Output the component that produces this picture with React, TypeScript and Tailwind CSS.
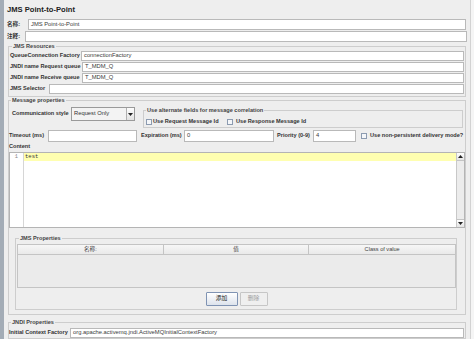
import React from "react";

const font = "font-['Liberation_Sans','Noto_Sans_CJK_SC',sans-serif]";

const Field = ({ value = "", className = "" }: { value?: string; className?: string }) => (
  <div
    className={`h-full bg-white border border-[#b9b9b9] flex items-center pl-[2px] text-[5.8px] leading-none text-[#3a3a3a] whitespace-nowrap overflow-hidden ${className}`}
  >
    {value}
  </div>
);

const Label = ({ text, className = "" }: { text: string; className?: string }) => (
  <span className={`text-[5.6px] font-bold leading-none text-[#333] whitespace-nowrap shrink-0 ${className}`}>
    {text}
  </span>
);

const Box = ({
  title,
  className = "",
  children,
}: {
  title: string;
  className?: string;
  children: React.ReactNode;
}) => (
  <fieldset className={`border border-[#cdcdcd] min-w-0 ${className}`}>
    <legend className="ml-[2px] px-[1px] text-[5.6px] font-bold leading-[6px] text-[#444]">
      {title}
    </legend>
    {children}
  </fieldset>
);

const Check = () => (
  <span className="w-[6px] h-[6px] border border-[#8c9bb0] bg-[#f4f6f9] shrink-0" />
);

const Arrow = ({ up }: { up?: boolean }) => (
  <svg width="5" height="3" viewBox="0 0 5 3">
    <path d={up ? "M0 3 L2.5 0 L5 3 Z" : "M0 0 L5 0 L2.5 3 Z"} fill="#222" />
  </svg>
);

export default function App() {
  const resources = [
    { label: "QueueConnection Factory", w: "w-[69px]", value: "connectionFactory" },
    { label: "JNDI name Request queue", w: "w-[70px]", value: "T_MDM_Q" },
    { label: "JNDI name Receive queue", w: "w-[70px]", value: "T_MDM_Q" },
    { label: "JMS Selector", w: "w-[37px]", value: "" },
  ];

  return (
    <div className={`w-[474px] h-[339px] overflow-hidden flex bg-[#eeeeee] ${font}`}>
      <div className="w-[4px] shrink-0 bg-[#a3acb6]" />

      <div className="w-[466px] shrink-0 flex flex-col px-[3px]">
        {/* Title */}
        <div className="h-[19px] flex items-center">
          <span className="text-[7.6px] font-bold text-[#222] leading-none">JMS Point-to-Point</span>
        </div>

        <div className="h-[11px] flex items-center">
          <Label text="名称:" className="w-[21px]" />
          <div className="flex-1 h-full mr-[1px]">
            <Field value="JMS Point-to-Point" />
          </div>
        </div>
        <div className="h-[11px] mt-[1px] flex items-center">
          <Label text="注释:" className="w-[18px]" />
          <div className="flex-1 h-full">
            <Field />
          </div>
        </div>

        {/* JMS Resources */}
        <Box title="JMS Resources" className="mx-[1px] mt-[1px] pl-[1px] pr-[1px] pb-[2px]">
          <div className="pt-[2px] flex flex-col gap-[1px]">
            {resources.map((r) => (
              <div key={r.label} className="h-[10px] flex items-center gap-[2px]">
                <Label text={r.label} className={r.w} />
                <div className="flex-1 h-full">
                  <Field value={r.value} />
                </div>
              </div>
            ))}
          </div>
        </Box>

        {/* Message properties */}
        <Box title="Message properties" className="mx-[1px] pb-[4px]">
          <div className="flex items-start">
            <div className="mt-[4px] h-[14px] pl-[3px] flex items-center gap-[2px]">
              <Label text="Communication style" className="w-[57px]" />
              <div className="w-[64px] h-full flex border border-[#9a9a9a] bg-[#f3f3f3]">
                <div className="flex-1 flex items-center pl-[2px] text-[5.8px] leading-none text-[#333]">
                  Request Only
                </div>
                <div className="w-[8px] border-l border-[#b0b0b0] bg-gradient-to-b from-[#fdfdfd] to-[#e2e2e2] flex items-center justify-center">
                  <Arrow />
                </div>
              </div>
            </div>
            <Box
              title="Use alternate fields for message correlation"
              className="ml-[8px] mr-[2px] mt-[4px] flex-1 pb-[1px]"
            >
              <div className="pt-[5px] h-[13px] flex items-center pl-[2px]">
                <div className="w-[81px] flex items-center gap-[1px]">
                  <Check />
                  <Label text="Use Request Message Id" />
                </div>
                <div className="flex items-center gap-[3px]">
                  <Check />
                  <Label text="Use Response Message Id" />
                </div>
              </div>
            </Box>
          </div>

          <div className="mt-[2px] h-[12px] flex items-center">
            <Label text="Timeout (ms)" className="w-[37px]" />
            <div className="w-[89px] h-full ml-[2px]">
              <Field />
            </div>
            <Label text="Expiration (ms)" className="w-[41px] ml-[4px]" />
            <div className="w-[90px] h-full ml-[2px]">
              <Field value="0" />
            </div>
            <Label text="Priority (0-9)" className="w-[34px] ml-[3px]" />
            <div className="w-[43px] h-full ml-[2px]">
              <Field value="4" />
            </div>
            <div className="ml-[5px] flex items-center gap-[3px]">
              <Check />
              <Label text="Use non-persistent delivery mode?" />
            </div>
          </div>

          <div className="h-[10px] flex items-center">
            <Label text="Content" />
          </div>

          {/* Editor */}
          <div className="h-[76px] flex border border-[#b4b4b4] bg-white">
            <div className="w-[14px] border-r border-[#d6d6d6] flex justify-end pr-[5px]">
              <span className="text-[5.4px] leading-[8px] text-[#888] font-['Liberation_Mono',monospace]">1</span>
            </div>
            <div className="flex-1">
              <div className="h-[8px] bg-[#ffffb0] flex items-center pl-[1px]">
                <span className="text-[5.6px] leading-none text-[#333] font-['Liberation_Mono',monospace]">test</span>
              </div>
            </div>
            <div className="w-[8px] border-l border-[#c8c8c8] bg-[#ececec] flex flex-col justify-between">
              <div className="h-[8px] bg-gradient-to-b from-white to-[#e4e4e4] border-b border-[#c4c4c4] flex items-center justify-center">
                <Arrow up />
              </div>
              <div className="h-[8px] bg-gradient-to-b from-white to-[#e4e4e4] border-t border-[#c4c4c4] flex items-center justify-center">
                <Arrow />
              </div>
            </div>
          </div>

          {/* JMS Properties */}
          <Box title="JMS Properties" className="ml-[6px] mr-[8px] mt-[7px] pl-[1px] pb-[3px]">
            <div className="pt-[3px]">
              <div className="border border-[#c4c4c4]">
                <div className="h-[10px] grid grid-cols-3 bg-gradient-to-b from-[#f7f7f7] to-[#e9e9e9] border-b border-[#c4c4c4] text-[5.6px] leading-none text-[#444]">
                  <div className="flex items-center justify-center border-r border-[#c4c4c4]">名称:</div>
                  <div className="flex items-center justify-center border-r border-[#c4c4c4]">值</div>
                  <div className="flex items-center justify-center">Class of value</div>
                </div>
                <div className="h-[32px] bg-[#ebebeb]" />
              </div>
              <div className="mt-[4px] h-[14px] flex justify-center gap-[2px]">
                <div className="w-[32px] h-full border border-[#7f93b3] rounded-[1px] bg-gradient-to-b from-white to-[#dde3ec] flex items-center justify-center text-[5.8px] leading-none text-[#222]">
                  添加
                </div>
                <div className="w-[28px] h-full border border-[#c6c6c6] rounded-[1px] bg-[#efefef] flex items-center justify-center text-[5.8px] leading-none text-[#a0a0a0]">
                  删除
                </div>
              </div>
            </div>
          </Box>
        </Box>

        {/* JNDI Properties */}
        <Box title="JNDI Properties" className="mx-[1px] mt-[4px]">
          <div className="pt-[3px] h-[13px] flex items-center gap-[3px]">
            <Label text="Initial Context Factory" className="w-[58px]" />
            <div className="flex-1 h-[10px] mr-[1px]">
              <Field value="org.apache.activemq.jndi.ActiveMQInitialContextFactory" />
            </div>
          </div>
        </Box>
      </div>

      <div className="w-[1px] shrink-0 bg-[#d2d2d2]" />
      <div className="flex-1 bg-[#f5f5f5]" />
    </div>
  );
}
